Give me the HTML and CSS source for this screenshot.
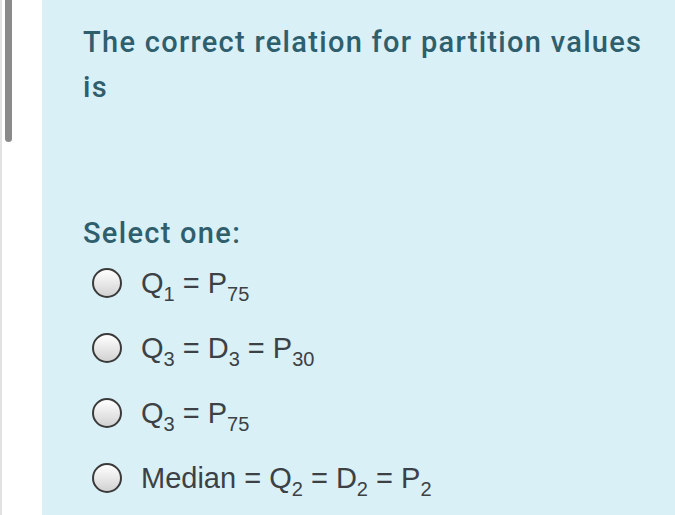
FILE: index.html
```html
<!DOCTYPE html>
<html>
<head>
<meta charset="utf-8">
<link rel="stylesheet" href="styles.css">
</head>
<body>
<div class="page">
  <div class="gutter"><div class="scrollbar"></div></div>
  <div class="panel">
    <div class="question">The correct relation for partition values is</div>
    <div class="prompt">Select one:</div>
    <div class="options">
      <label class="option"><span class="radio"></span><span class="text">Q<sub>1</sub> = P<sub>75</sub></span></label>
      <label class="option"><span class="radio"></span><span class="text">Q<sub>3</sub> = D<sub>3</sub> = P<sub>30</sub></span></label>
      <label class="option"><span class="radio"></span><span class="text">Q<sub>3</sub> = P<sub>75</sub></span></label>
      <label class="option"><span class="radio"></span><span class="text">Median = Q<sub>2</sub> = D<sub>2</sub> = P<sub>2</sub></span></label>
    </div>
  </div>
</div>
</body>
</html>
```
FILE: styles.css
```css
html, body {
  margin: 0;
  padding: 0;
  background: #ffffff;
}
.page {
  display: flex;
  width: 675px;
  height: 515px;
  overflow: hidden;
}
.gutter {
  width: 42px;
  flex: none;
  border-left: 2px solid #e2e2e2;
  box-sizing: border-box;
  background: #ffffff;
  padding-left: 3px;
}
.scrollbar {
  width: 7px;
  height: 142px;
  background: #8a8a8a;
  border-radius: 0 0 4px 4px;
}
.panel {
  flex: 1;
  background: #daf0f7;
  padding: 20px 0 0 41px;
  font-family: Roboto, "Liberation Sans", sans-serif;
}
.question {
  font-size: 29px;
  font-weight: 500;
  letter-spacing: 1.3px;
  color: #2f5e6d;
  line-height: 45px;
  width: 565px;
}
.prompt {
  margin-top: 108px;
  font-size: 29px;
  font-weight: 500;
  letter-spacing: 1.3px;
  color: #2f5e6d;
  line-height: 30px;
}
.options {
  margin-top: 20px;
  display: flex;
  flex-direction: column;
  gap: 35px;
}
.option {
  display: flex;
  align-items: center;
  height: 30px;
  padding-left: 9px;
}
.radio {
  width: 26px;
  height: 26px;
  border: 2px solid #3a3a3a;
  border-radius: 50%;
  background: linear-gradient(#ffffff, #d2d2d2);
  flex: none;
}
.text {
  margin-left: 19px;
  font-family: "Liberation Sans", Arial, sans-serif;
  font-size: 29px;
  color: #3c4146;
  line-height: 30px;
}
.text sub {
  font-size: 20px;
  vertical-align: -8px;
  line-height: 0;
}
```
